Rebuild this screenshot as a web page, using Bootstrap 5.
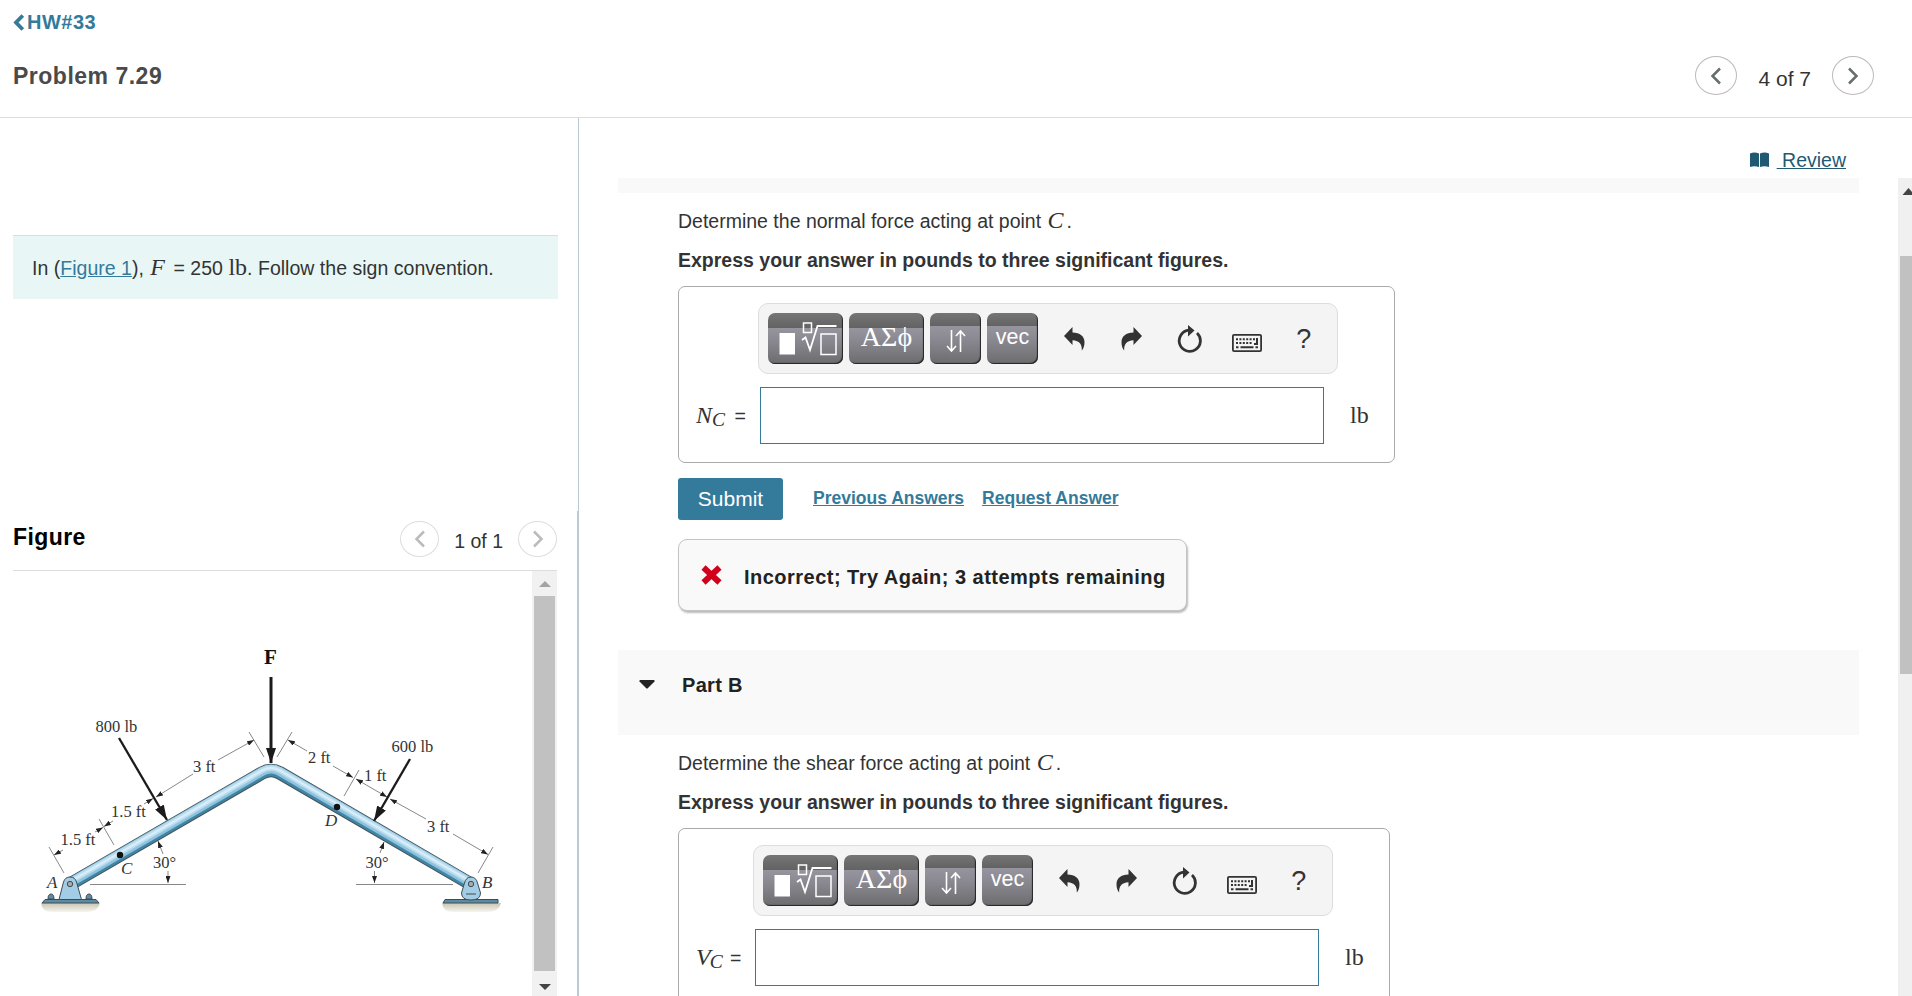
<!DOCTYPE html>
<html lang="en">

<head>
  <meta charset="UTF-8" />
  <meta name="viewport" content="width=device-width, initial-scale=1.0" />
  <title>HW#33 - Problem 7.29</title>
  <link href="https://cdn.jsdelivr.net/npm/bootstrap@5.3.0/dist/css/bootstrap.min.css" rel="stylesheet" />
  <style>
    body {
      font-family: "Liberation Sans", Arial, sans-serif;
      font-size: 19.5px;
      line-height: 24px;
      color: #333;
      height: 996px;
      overflow: hidden;
    }

    a {
      color: #347a9b;
    }

    svg {
      display: block;
      flex: none;
    }

    .math {
      font-family: "Liberation Serif", serif;
      font-size: 24px;
      line-height: 1px;
    }

    .math-gap {
      margin: 0 3px 0 1px;
    }

    .page-head {
      height: 118px;
      border-bottom: 1px solid #ddd;
      padding: 6px 38px 0 13px;
    }

    .back-link {
      font-size: 20px;
      font-weight: bold;
      letter-spacing: .5px;
      text-decoration: none;
      gap: 2px;
    }

    .problem-title {
      font-size: 23px;
      font-weight: bold;
      letter-spacing: .5px;
      color: #4a4a4a;
      margin: 30px 0 0;
      line-height: 24px;
    }

    .head-pager {
      margin-top: 50px;
      height: 39px;
    }

    .pager-btn {
      width: 42px;
      height: 39px;
      padding: 0;
      border: 1px solid #bbb;
      border-radius: 50%;
      background: #fff;
      color: #666e6e;
    }

    .pager-text {
      font-size: 21px;
      padding: 6px 21px 0;
    }

    /* left column */
    .left-pane {
      width: 579px;
      border-right: 1px solid #b9c7d6;
      padding-top: 117px;
    }

    .intro-box {
      width: 545px;
      height: 64px;
      margin-left: 13px;
      padding: 20px 19px 0;
      background: #e8f7f6;
      border-top: 1px solid #d9dfde;
      letter-spacing: .02px;
    }

    .figure-pane {
      width: 578px;
      margin-top: 212px;
      padding: 0 20px 0 13px;
      border-right: 1px solid #b9cbe4;
    }

    .figure-head {
      height: 60px;
      padding-top: 10px;
      border-bottom: 1px solid #ddd;
    }

    .figure-title {
      font-size: 23px;
      font-weight: bold;
      color: #000;
      letter-spacing: .4px;
      margin: 4px 0 0;
      line-height: 24px;
    }

    .figure-head .pager-btn {
      width: 39px;
      height: 36px;
      border-color: #ddd;
      color: #bbb;
    }

    .figure-head .pager-text {
      font-size: 19.5px;
      padding: 8px 15px 0;
    }

    .fig-scroll {
      width: 25px;
      background: #f1f1f1;
      padding: 10px 0 6px;
    }

    .fig-thumb {
      width: 21px;
      height: 375px;
      margin: 9px 0 13px;
      background: #c1c1c1;
    }

    /* right column */
    .review-bar {
      flex: none;
      height: 60px;
      padding: 30px 66px 0 0;
    }

    .review-bar a {
      color: #1f5a72;
    }

    .parts {
      width: 1241px;
      margin-left: 39px;
    }

    .part-strip {
      height: 15px;
      background: #f9f9f9;
    }

    .part-head {
      height: 85px;
      margin-top: 39px;
      padding: 23px 0 0 21px;
      background: #f9f9f9;
      gap: 27px;
      font-size: 20px;
      font-weight: bold;
      letter-spacing: .3px;
      color: #222;
    }

    .part-body {
      padding: 16px 0 0 60px;
    }

    .part-body p {
      margin: 0 0 15px;
    }

    .part-body p + p {
      margin-bottom: 14px;
    }

    .answer-box {
      width: 717px;
      height: 177px;
      border: 1px solid #aaa;
      border-radius: 7px;
      padding-top: 16px;
    }

    .answer-row {
      margin-top: 13px;
    }

    .answer-label {
      width: 81px;
      padding-left: 17px;
      white-space: nowrap;
    }

    .answer-label sub {
      font-size: 19.5px;
      bottom: -.2em;
      margin-right: 4px;
    }

    .answer-unit {
      padding-left: 26px;
    }

    .tool-bar {
      width: 580px;
      height: 71px;
      margin-left: 79px;
      padding: 9px;
      background: #f4f4f4;
      border: 1px solid #ddd;
      border-radius: 10px;
      gap: 6px;
    }

    .box-b {
      width: 712px;
    }

    .box-b .tool-bar {
      margin-left: 74px;
    }

    .box-b .answer-label {
      width: 76px;
    }

    .box-b .answer-label sub {
      margin: 0 2px 0 -1px;
    }

    .tool-btn {
      width: 51px;
      height: 51px;
      flex: none;
      border: 0;
      border-radius: 7px;
      padding: 0 0 4px;
      color: #fff;
      font-size: 21.5px;
      line-height: 24px;
      background: linear-gradient(#757575 0, #636363 25%, #96949e 26%, #8b8a92 50%, #6c6c6e 100%);
      box-shadow: inset -1px -1px 1px #222;
    }

    .tool-btn.wide-btn {
      width: 75px;
      background: linear-gradient(#757575 0, #636363 29%, #96949e 30%, #8b8a92 52%, #6c6c6e 100%);
    }

    .tool-btn.root-btn {
      padding: 0;
    }

    .tool-btn.greek {
      font-family: "Liberation Serif", serif;
      font-size: 28px;
    }

    .tool-icon {
      width: 57.3px;
      flex: none;
      padding-left: 4px;
      color: #333;
    }

    .help-icon {
      font-size: 27px;
    }

    .answer-input {
      width: 564px;
      height: 57px;
      border: 1px solid #347a9b;
      border-radius: 0;
      padding: 0 8px;
    }

    .action-row {
      margin-top: 15px;
    }

    .btn-submit {
      width: 105px;
      height: 42px;
      padding: 0;
      background: #347a9b;
      color: #fff;
      border: 0;
      border-radius: 3px;
      font-size: 21px;
    }

    .answer-link {
      font-size: 17.5px;
      font-weight: bold;
      margin: 0 18px 3px 0;
    }

    .prev-link {
      margin-left: 30px;
    }

    .feedback {
      width: 509px;
      height: 72px;
      margin-top: 19px;
      padding: 4px 0 0 22px;
      background: #f9f9f9;
      border: 1px solid #c4c4c4;
      border-radius: 9px;
      box-shadow: 1px 2px 2px #bbb;
      font-size: 20px;
      font-weight: bold;
      letter-spacing: .48px;
      color: #222;
      gap: 22px;
    }

    .page-scroll {
      width: 14px;
      background: #f0f0f0;
      padding: 10px 0 0 2px;
      overflow: hidden;
    }

    .page-thumb {
      height: 418px;
      margin-top: 61px;
      background: #c1c1c1;
    }
  </style>
</head>

<body>
  <!-- shared icons -->
  <svg width="0" height="0" class="position-absolute">
    <symbol id="i-left" viewBox="0 0 12 18"><path d="M10 1.500 2.500 9 10 16.500" fill="none" stroke="currentColor" stroke-width="2.500" /></symbol>
    <symbol id="i-right" viewBox="0 0 12 18"><path d="M2 1.500 9.500 9 2 16.500" fill="none" stroke="currentColor" stroke-width="2.500" /></symbol>
    <symbol id="i-undo" viewBox="0 0 21 24"><path d="M0 9 8.500 0v5.500C16 5.500 20.500 9.500 20.500 15c0 4-1 6.500-2.700 8.500.5-6-2.300-10-9.300-10.300v4.800z" fill="currentColor" /></symbol>
    <symbol id="i-reset" viewBox="0 0 26 28"><path d="M13 5.200A10.600 10.600 0 1 0 21 8" fill="none" stroke="currentColor" stroke-width="2.800" /><path d="M12 0l6.500 5.500L12 11.500z" fill="currentColor" /></symbol>
    <symbol id="i-keys" viewBox="0 0 30 18">
      <rect x=".9" y=".9" width="28.200" height="16.200" rx="1.200" fill="none" stroke="currentColor" stroke-width="1.800" />
      <path d="M4 5.200h19M4 9h17" stroke="currentColor" stroke-width="2" stroke-dasharray="2 1.400" />
      <path d="M25 4v6h-3M4 13.200h2.500M8.500 13.200h13M23.500 13.200H26" fill="none" stroke="currentColor" stroke-width="2" />
    </symbol>
    <symbol id="i-root" viewBox="0 0 75 51">
      <path d="M11.500 20H27v21.500H11.500z" fill="#fff" />
      <path d="M35.500 10h8v9.500h-8zM53 21h15v20.500H53z" fill="none" stroke="#fff" stroke-width="1.500" />
      <path d="M34 27l3.500-2.500L42 37l7.500-24H68.500" fill="none" stroke="#fff" stroke-width="1.800" />
    </symbol>
    <symbol id="i-updown" viewBox="0 0 20 24"><path d="M5.500 1v21M1 17l4.500 5 4.500-5M14.500 23V2M10 7l4.500-5 4.500 5" fill="none" stroke="#fff" stroke-width="1.600" /></symbol>
  </svg>

  <header class="page-head d-flex justify-content-between">
    <div>
      <a href="#" class="back-link d-flex align-items-center pt-1">
        <svg width="12" height="17" viewBox="0 0 12 17"><path d="M9.800 1.500 3 8.500l6.800 7" fill="none" stroke="currentColor" stroke-width="3.800" /></svg>
        <span>HW#33</span>
      </a>
      <h1 class="problem-title">Problem 7.29</h1>
    </div>
    <div class="head-pager d-flex align-items-center">
      <button class="pager-btn d-flex align-items-center justify-content-center"><svg width="12" height="18"><use href="#i-left" /></svg></button>
      <span class="pager-text">4 of 7</span>
      <button class="pager-btn d-flex align-items-center justify-content-center"><svg width="12" height="18"><use href="#i-right" /></svg></button>
    </div>
  </header>

  <div class="d-flex" style="height: 878px">
    <aside class="left-pane flex-shrink-0">
      <div class="intro-box text-nowrap">In (<a href="#">Figure 1</a>), <i class="math math-gap">F</i> = 250 <span class="math">lb</span>. Follow the sign convention.</div>

      <section class="figure-pane">
        <div class="figure-head d-flex justify-content-between">
          <h2 class="figure-title">Figure</h2>
          <div class="d-flex">
            <button class="pager-btn d-flex align-items-center justify-content-center"><svg width="12" height="18"><use href="#i-left" /></svg></button>
            <span class="pager-text">1 of 1</span>
            <button class="pager-btn d-flex align-items-center justify-content-center"><svg width="12" height="18"><use href="#i-right" /></svg></button>
          </div>
        </div>
        <div class="d-flex">
          <!-- gable frame A - B with loads -->
          <svg width="519" height="425" viewBox="13 571 519 425" font-family="Liberation Serif, serif" font-size="16.500" fill="#333">
            <defs>
              <marker id="tip" viewBox="0 0 7 5" refX="7" refY="2.500" markerWidth="7" markerHeight="5" markerUnits="userSpaceOnUse" orient="auto-start-reverse"><path d="M0 0 7 2.500 0 5z" fill="#222" /></marker>
              <marker id="load" viewBox="0 0 15 10" refX="15" refY="5" markerWidth="15" markerHeight="10" markerUnits="userSpaceOnUse" orient="auto"><path d="M0 0 15 5 0 10z" fill="#1c1a1b" /></marker>
              <linearGradient id="ground" x1="0" y1="0" x2="0" y2="1"><stop offset="0" stop-color="#c9c5b2" /><stop offset="1" stop-color="#f6f5ef" /></linearGradient>
              <path id="frame" d="M72 883 262 773Q271 768 280 773L469 883" />
            </defs>
            <g fill="none" stroke-linejoin="round">
              <use href="#frame" stroke="#46525a" stroke-width="13.500" />
              <use href="#frame" stroke="#3f86a6" stroke-width="11.500" />
              <use href="#frame" stroke="#8fc3dd" stroke-width="9" y="-1.500" />
              <use href="#frame" stroke="#b9dcef" stroke-width="6" y="-2.500" />
              <use href="#frame" stroke="#d8edf9" stroke-width="2.500" y="-2.500" />
            </g>
            <g stroke="#888" stroke-width="1" fill="none">
              <path d="M49 847 64 873M99 819l15 26M249 732l15 25M292 732l-15 25M359 770l-15 26M493 847l-15 26M90 884.500h96M356 884.500h97" />
              <path d="M63 850 54 855" marker-end="url(#tip)" />
              <path d="M95 832 103 827.500" marker-end="url(#tip)" />
              <path d="M113 821 104 826.500" marker-end="url(#tip)" />
              <path d="M144 804 153 798.500" marker-end="url(#tip)" />
              <path d="M193 774 156 797" marker-end="url(#tip)" />
              <path d="M218 760 254 740" marker-end="url(#tip)" />
              <path d="M307 751 288 740" marker-end="url(#tip)" />
              <path d="M333 766 353 777.500" marker-end="url(#tip)" />
              <path d="M356 779 387 797" marker-start="url(#tip)" marker-end="url(#tip)" />
              <path d="M426 819 390 799" marker-end="url(#tip)" />
              <path d="M453 834 488 854.500" marker-end="url(#tip)" />
              <path d="M163 854 158 841" marker-end="url(#tip)" />
              <path d="M168 871v12" marker-end="url(#tip)" />
              <path d="M380 853 384 842" marker-end="url(#tip)" />
              <path d="M374.500 871v12" marker-end="url(#tip)" />
            </g>
            <g stroke="#1c1a1b" fill="none">
              <path d="M271 677v86" stroke-width="3" marker-end="url(#load)" />
              <path d="M119 738 167 820" stroke-width="2.300" marker-end="url(#load)" />
              <path d="M410 759 374 821" stroke-width="2.300" marker-end="url(#load)" />
            </g>
            <!-- supports -->
            <path d="M41 903h59q-2 9-14 9H52q-10 0-11-9zM442 903h59q-2 9-14 9h-34q-10 0-11-9z" fill="url(#ground)" />
            <g stroke="#3c4d57">
              <path d="M45 899.500h51l3 3.500H42zM445 899.500h53v3.500h-55z" fill="#5f8ba2" />
              <path d="M48 899q0-5 3-5t3 5zM86 899q0-5 3-5t3 5z" fill="#5f8ba2" />
              <path d="M59 899.500 63.500 882Q65 877 70 877t6.500 5L81.500 899.500z" fill="#a3cde4" />
              <path d="M471 877q5 0 6.500 6l3 10q0 7-9.500 7t-9.500-7l3-10q1.500-6 6.500-6z" fill="#a3cde4" />
              <path d="M466 894h10" />
              <circle cx="70" cy="884" r="2.700" fill="#aaa" />
              <circle cx="471" cy="884" r="2.700" fill="#aaa" />
            </g>
            <circle cx="120" cy="855" r="3.200" fill="#111" />
            <circle cx="337" cy="807" r="3.200" fill="#111" />
            <text x="264" y="664" font-size="21" font-weight="bold" fill="#111">F</text>
            <text x="95.500" y="732">800 lb</text>
            <text x="391.500" y="752">600 lb</text>
            <text x="60.500" y="845">1.5 ft</text>
            <text x="111" y="817">1.5 ft</text>
            <text x="193" y="772">3 ft</text>
            <text x="308" y="763">2 ft</text>
            <text x="364" y="781">1 ft</text>
            <text x="427" y="832">3 ft</text>
            <text x="153" y="868">30°</text>
            <text x="365.500" y="868">30°</text>
            <g font-style="italic" font-size="17">
              <text x="47" y="888">A</text>
              <text x="482" y="888">B</text>
              <text x="121" y="874">C</text>
              <text x="325" y="826">D</text>
            </g>
          </svg>
          <div class="fig-scroll d-flex flex-column align-items-center">
            <svg width="12" height="6"><path d="M6 0l6 6H0z" fill="#a3a3a3" /></svg>
            <div class="fig-thumb"></div>
            <svg width="12" height="6"><path d="M0 0h12L6 6z" fill="#444" /></svg>
          </div>
        </div>
      </section>
    </aside>

    <main class="flex-grow-1 d-flex flex-column">
      <div class="review-bar d-flex justify-content-end">
        <svg class="mt-1 me-2" width="19" height="16" viewBox="0 0 19 16"><path d="M0 1.500Q4.500-.3 9 1.500v13.500Q4.500 13.500 0 15zM10 1.500q4.500-1.800 9 0V15q-4.500-1.500-9 0z" fill="#1f5a72" /></svg>
        <a href="#">&nbsp;Review</a>
      </div>
      <div class="d-flex flex-grow-1 justify-content-between">
        <div class="parts">
          <div class="part-strip"></div>
          <div class="part-body">
            <p>Determine the normal force acting at point <i class="math math-gap">C</i>.</p>
            <p><b>Express your answer in pounds to three significant figures.</b></p>
            <div class="answer-box">
              <div class="tool-bar d-flex">
                <button class="tool-btn wide-btn root-btn"><svg width="75" height="51"><use href="#i-root" /></svg></button>
                <button class="tool-btn wide-btn greek">ΑΣϕ</button>
                <button class="tool-btn d-flex align-items-center justify-content-center"><svg width="20" height="24" class="mt-2"><use href="#i-updown" /></svg></button>
                <button class="tool-btn">vec</button>
                <div class="d-flex align-items-center">
                  <span class="tool-icon d-flex justify-content-center"><svg width="21" height="24"><use href="#i-undo" /></svg></span>
                  <span class="tool-icon d-flex justify-content-center"><svg width="21" height="24"><use href="#i-undo" transform="matrix(-1 0 0 1 21 0)" /></svg></span>
                  <span class="tool-icon d-flex justify-content-center"><svg width="26" height="28"><use href="#i-reset" /></svg></span>
                  <span class="tool-icon d-flex justify-content-center pt-2"><svg width="30" height="18"><use href="#i-keys" /></svg></span>
                  <span class="tool-icon help-icon d-flex justify-content-center">?</span>
                </div>
              </div>
              <div class="d-flex align-items-center answer-row">
                <label class="answer-label" for="nc"><i class="math">N<sub>C</sub></i> =</label>
                <input class="answer-input" type="text" id="nc">
                <span class="math answer-unit">lb</span>
              </div>
            </div>
            <div class="d-flex align-items-center action-row">
              <button class="btn-submit">Submit</button>
              <a href="#" class="answer-link prev-link">Previous Answers</a>
              <a href="#" class="answer-link">Request Answer</a>
            </div>
            <div class="feedback d-flex align-items-center">
              <svg class="mb-1" width="21" height="20" viewBox="0 0 21 20"><path d="M2.500 2.500l16 15M18.500 2.500l-16 15" stroke="#d0021b" stroke-width="6" /></svg>
              <span>Incorrect; Try Again; 3 attempts remaining</span>
            </div>
          </div>

          <div class="part-head d-flex">
            <svg class="mt-1" width="16" height="17" viewBox="0 0 16 17"><path d="M1 3h14q1 .5.500 1.500L9 11q-1 1-2 0L.5 4.500Q0 3.500 1 3z" fill="#222" /></svg>
            <span>Part B</span>
          </div>
          <div class="part-body">
            <p>Determine the shear force acting at point <i class="math math-gap">C</i>.</p>
            <p><b>Express your answer in pounds to three significant figures.</b></p>
            <div class="answer-box box-b">
              <div class="tool-bar d-flex">
                <button class="tool-btn wide-btn root-btn"><svg width="75" height="51"><use href="#i-root" /></svg></button>
                <button class="tool-btn wide-btn greek">ΑΣϕ</button>
                <button class="tool-btn d-flex align-items-center justify-content-center"><svg width="20" height="24" class="mt-2"><use href="#i-updown" /></svg></button>
                <button class="tool-btn">vec</button>
                <div class="d-flex align-items-center">
                  <span class="tool-icon d-flex justify-content-center"><svg width="21" height="24"><use href="#i-undo" /></svg></span>
                  <span class="tool-icon d-flex justify-content-center"><svg width="21" height="24"><use href="#i-undo" transform="matrix(-1 0 0 1 21 0)" /></svg></span>
                  <span class="tool-icon d-flex justify-content-center"><svg width="26" height="28"><use href="#i-reset" /></svg></span>
                  <span class="tool-icon d-flex justify-content-center pt-2"><svg width="30" height="18"><use href="#i-keys" /></svg></span>
                  <span class="tool-icon help-icon d-flex justify-content-center">?</span>
                </div>
              </div>
              <div class="d-flex align-items-center answer-row">
                <label class="answer-label" for="vc"><i class="math">V<sub>C</sub></i> =</label>
                <input class="answer-input" type="text" id="vc">
                <span class="math answer-unit">lb</span>
              </div>
            </div>
          </div>
        </div>

        <div class="page-scroll">
          <svg width="16" height="7"><path d="M8.500 0l6 7h-12z" fill="#444" /></svg>
          <div class="page-thumb"></div>
        </div>
      </div>
    </main>
  </div>

  <script src="https://cdn.jsdelivr.net/npm/bootstrap@5.3.0/dist/js/bootstrap.bundle.min.js"></script>
</body>

</html>
